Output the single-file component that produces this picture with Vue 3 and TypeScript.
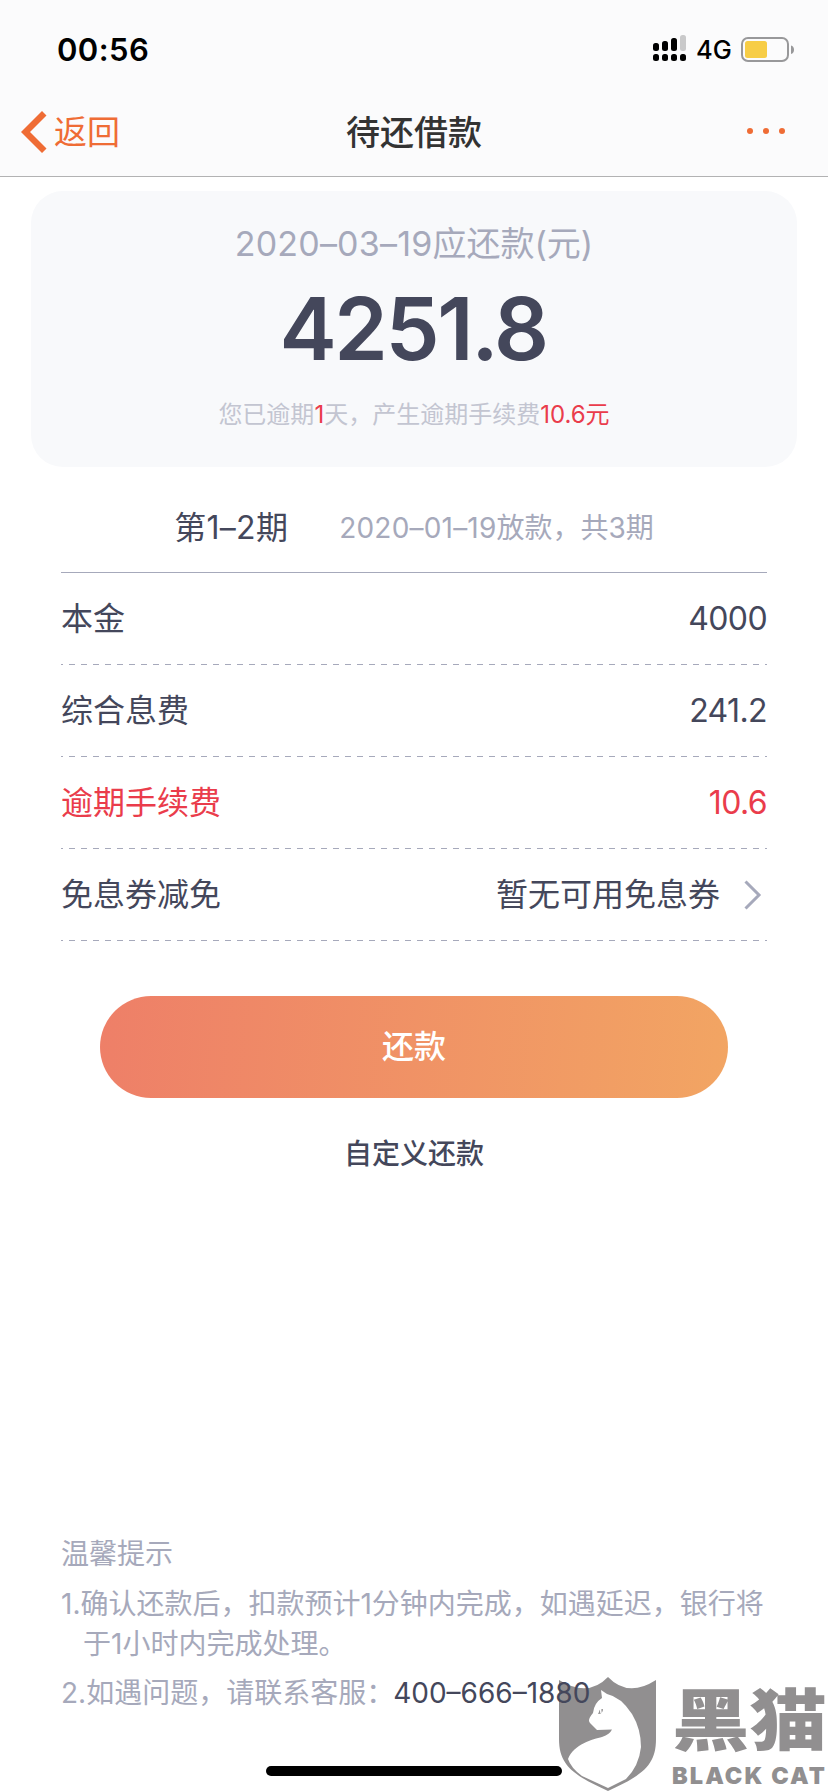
<script setup lang="ts">
interface Row { label: string; value: string; alert?: boolean; link?: boolean }
const rows: Row[] = [
  { label: '本金', value: '4000' },
  { label: '综合息费', value: '241.2' },
  { label: '逾期手续费', value: '10.6', alert: true },
  { label: '免息券减免', value: '暂无可用免息券', link: true },
]
const signal: number[] = [8, 10, 13, 16]
</script>

<template>
  <div class="screen">
    <header class="top">
      <div class="status">
        <span class="time">00:56</span>
        <div class="indicators">
          <svg class="signal" width="34" height="28" viewBox="0 0 34 28">
            <g v-for="(h, i) in signal" :key="i">
              <rect :x="i * 9" :y="17 - h" width="6" :height="h" rx="2.5" :fill="i === 3 ? '#c9c9ca' : '#000'" />
              <rect :x="i * 9" y="20" width="6" height="7" rx="2.5" fill="#000" />
            </g>
          </svg>
          <span class="network">4G</span>
          <svg class="battery" width="54" height="26" viewBox="0 0 54 26">
            <rect x="1" y="1" width="46" height="23" rx="6" fill="none" stroke="#98989a" stroke-width="2" />
            <rect x="4" y="4" width="22" height="17" rx="2.5" fill="#f7cd46" />
            <path d="M50 8.5C54 9.5 54 16 50 17Z" fill="#98989a" />
          </svg>
        </div>
      </div>
      <nav class="nav">
        <div class="back">
          <svg width="26" height="42" viewBox="0 0 26 42"><path d="M21 0L25.5 4.5L9 21L25.5 37.500L21 42L0 21Z" fill="#ef6c35" /></svg>
          <span>返回</span>
        </div>
        <h1>待还借款</h1>
        <svg class="more" width="38" height="6" viewBox="0 0 38 6" fill="#ef6c35"><circle cx="3" cy="3" r="3" /><circle cx="19" cy="3" r="3" /><circle cx="35" cy="3" r="3" /></svg>
      </nav>
    </header>

    <section class="card">
      <div class="due"><span class="date">2020–03–19</span>应还款(元)</div>
      <div class="amount">4251.8</div>
      <div class="overdue">您已逾期<b>1</b>天，产生逾期手续费<b>10.6元</b></div>
    </section>

    <section class="bill">
      <div class="period">
        <span class="term">第1–2期</span>
        <span class="loan"><span class="date">2020–01–19</span>放款，共3期</span>
      </div>
      <div v-for="row in rows" :key="row.label" class="row" :class="{ alert: row.alert }">
        <span>{{ row.label }}</span>
        <span class="value" :class="{ link: row.link }"><span>{{ row.value }}</span>
          <svg v-if="row.link" width="18" height="30" viewBox="0 0 18 30"><path d="M1.500 1.500L15 15L1.500 28.500" fill="none" stroke="#a6a9bb" stroke-width="3" /></svg>
        </span>
      </div>
    </section>

    <button class="pay">还款</button>
    <div class="custom">自定义还款</div>

    <footer class="tips">
      <div class="tip-title">温馨提示</div>
      <div class="tip first">1.确认还款后，扣款预计1分钟内完成，如遇延迟，银行将</div>
      <div class="tip cont">于1小时内完成处理。</div>
      <div class="tip help">2.如遇问题，请联系客服：<span class="phone">400–666–1880</span></div>
    </footer>

    <div class="home"></div>

    <div class="mark">
      <svg class="shield" width="98" height="115" viewBox="0 0 98 115">
        <path d="M0 3Q29 21 49 0Q69 21 97 3V62C97 88 84 98 49 114C14 98 0 88 0 62Z" fill="#918f90" />
        <path d="M42 13L48 17Q62 20 73 37Q82 52 82 70Q80 89 67 102L49 111L23 99Q12 91 9 82C15 67 34 62 43 60Q51 57 53 52.500L38 53Q35 50 31 46Q28 43 34 36Q35 26 43 21Z" fill="#fff" />
        <path d="M40 35Q40 32 44 32Q44 37 39 37Z" fill="#918f90" /><path d="M41.500 32L42 36" stroke="#fff" stroke-width="1.500" />
      </svg>
      <div class="brand">
        <div class="brand-cn">黑猫</div>
        <div class="brand-en">BLACK CAT</div>
      </div>
    </div>
  </div>
</template>

<style>
body { background: #fff; }
</style>

<style scoped>
.screen {
  position: relative;
  width: 828px;
  height: 1792px;
  overflow: hidden;
  background: #fff;
  color: #44475b;
  font-family: Inter, "Noto Sans CJK SC", sans-serif;
  display: flex;
  flex-direction: column;
}
.top { height: 176px; background: #fbfbfc; border-bottom: 1px solid #b2b2b3; flex: none; }
.status { height: 88px; display: flex; justify-content: space-between; padding: 0 33px 0 57px; color: #000; }
.time { font-size: 31px; font-weight: 600; line-height: 100px; letter-spacing: 0.4px; }
.indicators { display: flex; align-items: flex-start; }
.signal { margin: 34px 9px 0 0; }
.network { font-size: 25.5px; font-weight: 500; line-height: 100px; width: 45px; }
.battery { margin-top: 37px; }
.nav { height: 88px; display: flex; align-items: center; justify-content: space-between; padding: 0 43px 0 21px; position: relative; }
.back { display: flex; align-items: center; color: #ef6c35; font-size: 33px; line-height: 42px; gap: 7px; }
.nav h1 { position: absolute; left: 0; right: 0; margin: 1px 0 0; text-align: center; font-size: 34px; line-height: 42px; font-weight: 500; color: #333; }
.more { margin-top: -2px; }
.card {
  margin: 14px 31px 0;
  height: 276px;
  flex: none;
  border-radius: 32px;
  background: #f8f9fb;
  text-align: center;
}
.due { padding-top: 32px; font-size: 34px; line-height: 42px; color: #a6a9bb; }
.amount { font-size: 86px; line-height: 86px; margin-top: 21px; font-weight: 600; letter-spacing: -2.4px; text-indent: -2px; }
.overdue { font-size: 24px; line-height: 30px; margin-top: 28px; color: #c3c5d1; }
.overdue b { font-weight: 400; color: #ea3c4b; }
.bill { margin: 0 61px; }
.period { height: 105px; border-bottom: 1px solid #a6a9bb; display: flex; justify-content: center; }
.term { font-size: 32px; line-height: 121px; margin-right: 51px; letter-spacing: 0.3px; }
.loan { font-size: 28px; line-height: 123px; color: #a6a9bb; }
.date { letter-spacing: 0.2px; }
.row {
  height: 92px;
  display: flex;
  justify-content: space-between;
  font-size: 32px;
  line-height: 92px;
  background: repeating-linear-gradient(90deg, #a6a9bb 0 2px, transparent 2px 8px, #a6a9bb 8px 12px) left bottom / 100% 1px no-repeat;
}
.alert { color: #ea3c4b; }
.value { display: flex; align-items: center; letter-spacing: -0.6px; }
.link { letter-spacing: 0; }
.value svg { margin: 0 5px 0 24px; }
.pay {
  width: 628px;
  height: 102px;
  flex: none;
  margin: 55px auto 0;
  border: 0;
  padding: 0;
  border-radius: 51px;
  background: linear-gradient(95deg, #ee7f68, #f2a563);
  color: #fff;
  font: 500 32px/102px Inter, "Noto Sans CJK SC", sans-serif;
}
.custom { margin-top: 36px; text-align: center; font-size: 28px; line-height: 40px; font-weight: 500; }
.tips { margin: 360px 61px 0; color: #a6a9bb; font-size: 28px; line-height: 40px; white-space: nowrap; }
.first { margin-top: 10px; }
.cont { padding-left: 22px; }
.help { margin-top: 9px; position: relative; z-index: 2; }
.phone { color: #44475b; margin-left: -1px; }
.home { position: absolute; left: 266px; top: 1766px; width: 296px; height: 10px; border-radius: 5px; background: #000; }
.mark { position: absolute; left: 559px; top: 1677px; display: flex; z-index: 1; color: #918f90; }
.brand { margin-left: 15px; white-space: nowrap; }
.brand-cn { font-size: 76px; line-height: 86px; font-weight: 900; transform: scale(1.02, 0.89); transform-origin: left center; }
.brand-en { font-size: 23.5px; line-height: 24px; font-weight: 900; margin-top: 1px; letter-spacing: 2.1px; }
</style>
